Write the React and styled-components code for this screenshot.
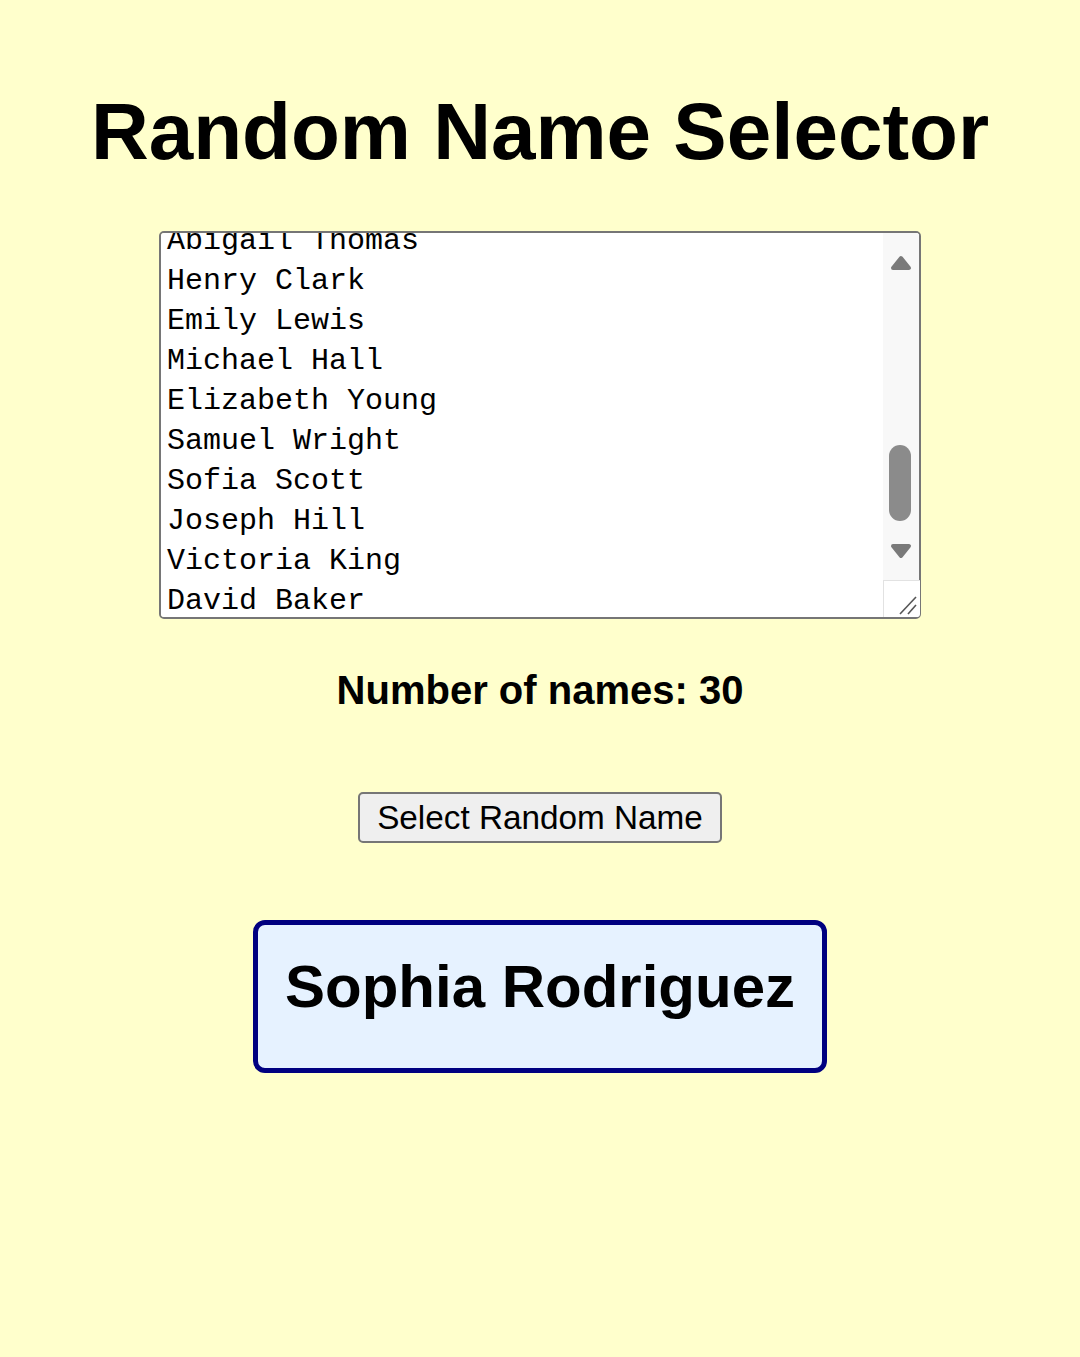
import { useLayoutEffect, useRef, useState } from "react";
import styled, { createGlobalStyle } from "styled-components";

const initialNames = [
  "Emma Johnson",
  "Liam Smith",
  "Olivia Brown",
  "Noah Williams",
  "Ava Jones",
  "Ethan Garcia",
  "Sophia Rodriguez",
  "Mason Martinez",
  "Isabella Davis",
  "Lucas Miller",
  "Mia Wilson",
  "James Moore",
  "Charlotte Taylor",
  "Benjamin Anderson",
  "Amelia Jackson",
  "Alexander White",
  "Harper Harris",
  "Daniel Martin",
  "Evelyn Thompson",
  "Matthew Lee",
  "Abigail Thomas",
  "Henry Clark",
  "Emily Lewis",
  "Michael Hall",
  "Elizabeth Young",
  "Samuel Wright",
  "Sofia Scott",
  "Joseph Hill",
  "Victoria King",
  "David Baker",
];

const LINE = 40;

export default function App() {
  const [text, setText] = useState(initialNames.join("\n"));
  const [selected, setSelected] = useState("Sophia Rodriguez");
  const [scroll, setScroll] = useState({ top: 0, client: 1, height: 1 });
  const listRef = useRef(null);

  const names = text
    .split("\n")
    .map((n) => n.trim())
    .filter(Boolean);

  const syncScroll = () => {
    const el = listRef.current;
    if (!el) return;
    setScroll({ top: el.scrollTop, client: el.clientHeight, height: el.scrollHeight });
  };

  // start with the end of the list in view
  useLayoutEffect(() => {
    const el = listRef.current;
    if (el) {
      el.scrollTop = el.scrollHeight - el.clientHeight - 4;
      syncScroll();
    }
  }, []);

  const scrollBy = (dy) => {
    if (listRef.current) listRef.current.scrollTop += dy;
  };

  const pickName = () => {
    if (!names.length) return;
    setSelected(names[Math.floor(Math.random() * names.length)]);
  };

  // thumb geometry inside a 238px run
  const run = 238;
  const ratio = Math.min(1, scroll.client / scroll.height);
  const thumbLen = Math.max(30, run * ratio);
  const maxTop = Math.max(1, scroll.height - scroll.client);
  const thumbTop = (run - thumbLen) * Math.min(1, (scroll.top + 4) / maxTop);

  return (
    <>
      <GlobalStyle />
      <Page>
        <Title>Random Name Selector</Title>
        <ListFrame>
          <NameList
            ref={listRef}
            value={text}
            onChange={(e) => {
              setText(e.target.value);
              syncScroll();
            }}
            onScroll={syncScroll}
            spellCheck={false}
          />
          <ScrollBar>
            <ArrowButton $up onClick={() => scrollBy(-LINE)}>
              <svg width="22" height="15" viewBox="0 0 22 15">
                <polygon
                  points="3,13 11,3 19,13"
                  fill="#7a7a7a"
                  stroke="#7a7a7a"
                  strokeWidth="4"
                  strokeLinejoin="round"
                />
              </svg>
            </ArrowButton>
            <Track>
              <Thumb style={{ top: thumbTop, height: thumbLen }} />
            </Track>
            <ArrowButton onClick={() => scrollBy(LINE)}>
              <svg width="22" height="15" viewBox="0 0 22 15">
                <polygon
                  points="3,2 11,12 19,2"
                  fill="#7a7a7a"
                  stroke="#7a7a7a"
                  strokeWidth="4"
                  strokeLinejoin="round"
                />
              </svg>
            </ArrowButton>
            <Corner>
              <svg width="36" height="37" viewBox="0 0 36 37">
                <line x1="17" y1="34" x2="33" y2="17" stroke="#555" strokeWidth="1.6" />
                <line x1="25" y1="34" x2="33" y2="25" stroke="#555" strokeWidth="1.6" />
              </svg>
            </Corner>
          </ScrollBar>
        </ListFrame>
        <Count>Number of names: {names.length}</Count>
        <PickButton onClick={pickName}>Select Random Name</PickButton>
        <Result>{selected}</Result>
      </Page>
    </>
  );
}

const GlobalStyle = createGlobalStyle`
  html, body {
    margin: 0;
    min-height: 100%;
    background-color: #ffffcc;
  }
  body {
    font-family: "Liberation Sans", Arial, sans-serif;
    color: #000;
  }
`;

const Page = styled.div`
  display: flex;
  flex-direction: column;
  align-items: center;
  min-height: 1357px;
  box-sizing: border-box;
`;

const Title = styled.h1`
  margin: 86px 0 53px;
  font-size: 80px;
  line-height: 92px;
  font-weight: bold;
`;

const ListFrame = styled.div`
  position: relative;
  width: 762px;
  height: 388px;
`;

const NameList = styled.textarea`
  display: block;
  width: 100%;
  height: 100%;
  box-sizing: border-box;
  margin: 0;
  padding: 5px 44px 0 6px;
  border: 2px solid #767676;
  border-radius: 5px;
  background: #fff;
  color: #000;
  font-family: "Liberation Mono", "DejaVu Sans Mono", monospace;
  font-size: 30px;
  line-height: ${LINE}px;
  outline: none;
  resize: none;
  scrollbar-width: none;

  &::-webkit-scrollbar {
    display: none;
  }
`;

/* drawn scrollbar that sits over the textarea's right edge */
const ScrollBar = styled.div`
  position: absolute;
  top: 2px;
  right: 2px;
  bottom: 2px;
  width: 36px;
  display: flex;
  flex-direction: column;
  background: #f8f8f8;
  border-radius: 0 3px 3px 0;
`;

const ArrowButton = styled.div`
  flex: 0 0 46px;
  display: flex;
  justify-content: center;
  align-items: ${({ $up }) => ($up ? "flex-end" : "flex-start")};
  padding: ${({ $up }) => ($up ? "0 0 9px" : "10px 0 0")};
  box-sizing: border-box;
  cursor: default;
`;

const Track = styled.div`
  position: relative;
  flex: 1;
  margin: 4px 0 13px;
`;

const Thumb = styled.div`
  position: absolute;
  left: 6px;
  width: 22px;
  border-radius: 11px;
  background: #8b8b8b;
`;

const Corner = styled.div`
  flex: 0 0 37px;
  margin-right: -1px;
  box-sizing: border-box;
  background: #fff;
  border-left: 1px solid #e2e2e2;
  border-top: 1px solid #e2e2e2;
  border-bottom-right-radius: 3px;
  svg {
    display: block;
    margin-left: -1px;
    margin-top: -1px;
  }
`;

const Count = styled.p`
  margin: 48px 0 0;
  font-size: 40px;
  line-height: 46px;
  font-weight: bold;
`;

const PickButton = styled.button`
  margin-top: 79px;
  height: 51px;
  padding: 0 17px;
  border: 2px solid #767676;
  border-radius: 5px;
  background: #efefef;
  color: #000;
  font-family: "Liberation Sans", Arial, sans-serif;
  font-size: 33.3px;
  line-height: 38px;
  cursor: pointer;

  &:hover {
    background: #e5e5e5;
  }
`;

const Result = styled.div`
  margin-top: 77px;
  padding: 27px 27px 47px;
  border: 5px solid #000080;
  border-radius: 12px;
  background: #e6f2ff;
  font-size: 60px;
  line-height: 69px;
  font-weight: bold;
`;
